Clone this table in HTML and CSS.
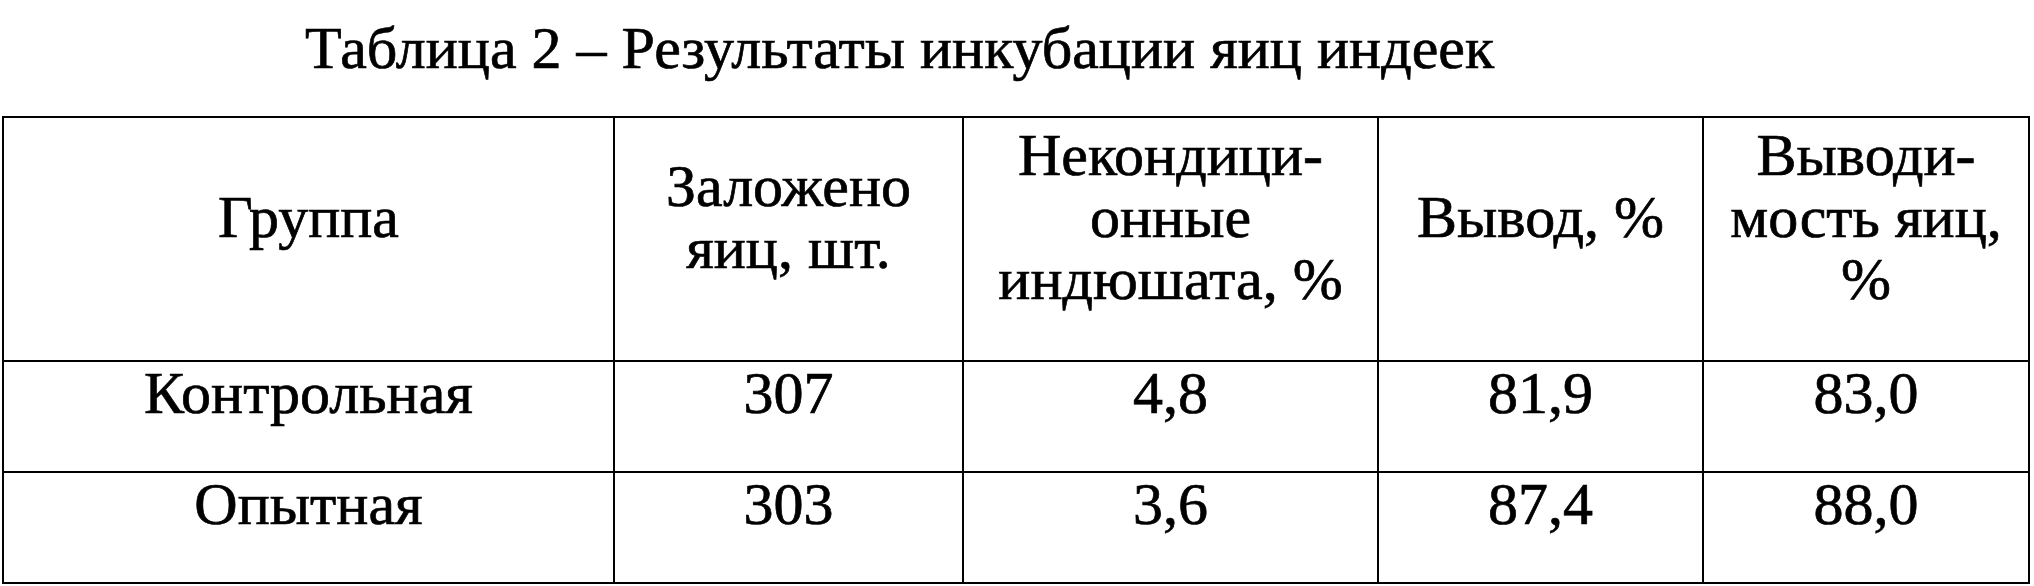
FILE: index.html
```html
<!DOCTYPE html>
<html lang="ru">
<head>
<meta charset="utf-8">
<title>Таблица 2</title>
<link rel="stylesheet" href="styles.css">
</head>
<body>
<div class="page">
  <div class="caption">Таблица 2 – Результаты инкубации яиц индеек</div>
  <table class="data">
    <colgroup>
      <col class="c1"><col class="c2"><col class="c3"><col class="c4"><col class="c5">
    </colgroup>
    <thead>
      <tr>
        <th>Группа</th>
        <th>Заложено<br>яиц, шт.</th>
        <th>Некондици-<br>онные<br>индюшата, %</th>
        <th>Вывод, %</th>
        <th>Выводи-<br>мость яиц,<br>%</th>
      </tr>
    </thead>
    <tbody>
      <tr>
        <td>Контрольная</td>
        <td>307</td>
        <td>4,8</td>
        <td>81,9</td>
        <td>83,0</td>
      </tr>
      <tr>
        <td>Опытная</td>
        <td>303</td>
        <td>3,6</td>
        <td>87,4</td>
        <td>88,0</td>
      </tr>
    </tbody>
  </table>
</div>
</body>
</html>
```
FILE: styles.css
```css
html, body {
  margin: 0;
  padding: 0;
  background: #ffffff;
}
body {
  font-family: "Liberation Serif", "Times New Roman", serif;
  color: #000000;
  -webkit-text-stroke: 0.7px #000000;
}
.page {
  width: 2034px;
  height: 586px;
  overflow: hidden;
}
.caption {
  font-size: 60px;
  line-height: 64px;
  padding-left: 305px;
  padding-top: 16px;
  height: 116px;
  box-sizing: border-box;
  white-space: nowrap;
}
.data {
  border-collapse: collapse;
  table-layout: fixed;
  width: 2028px;
  margin-left: 2px;
  font-size: 60px;
  line-height: 62px;
}
.c1 { width: 611px; }
.c2 { width: 349px; }
.c3 { width: 415px; }
.c4 { width: 325px; }
.c5 { width: 326px; }
.data th,
.data td {
  border: 2.5px solid #000;
  text-align: center;
  font-weight: normal;
  padding: 0 4px;
}
.data thead tr { height: 244px; }
.data th {
  vertical-align: middle;
  padding-top: 0;
  padding-bottom: 44px;
}
.data tbody tr { height: 111px; }
.data td {
  vertical-align: top;
  padding-top: 0;
}
```
